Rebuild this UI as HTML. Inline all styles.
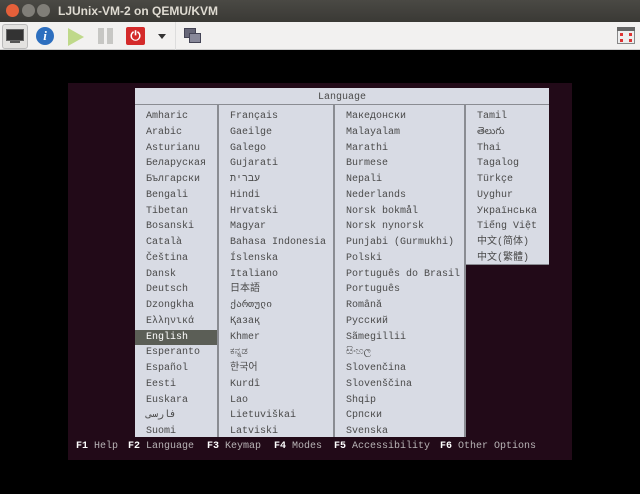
<!DOCTYPE html>
<html><head><meta charset="utf-8"><style>
*{margin:0;padding:0;box-sizing:border-box}
body{width:640px;height:494px;background:#000;position:relative;overflow:hidden;font-family:"Liberation Sans",sans-serif}
.tb{position:absolute;left:0;top:0;width:640px;height:22px;background:linear-gradient(#4a4944,#3a3935)}
.tb .t{position:absolute;left:58px;top:4px;color:#dfdbd2;font-size:12px;font-weight:bold}
.c{position:absolute;top:4px;width:13px;height:13px;border-radius:50%}
.tool{position:absolute;left:0;top:22px;width:640px;height:28px;background:#f2f1f0;border-bottom:1px solid #ccc}
.vm{position:absolute;left:68px;top:83px;width:504px;height:377px;background:#220a18}
.dlg{position:absolute;left:135px;top:88px;width:414px;height:349px;background:#d8dbe4}
.hdr{position:absolute;left:0;top:0;width:414px;height:17px;border-bottom:1px solid #8a8c92;text-align:center;font:10px/20px "Liberation Mono","DejaVu Sans Mono",monospace;color:#4a4a4a}
.col{position:absolute;font:10px/15.75px "Liberation Mono","DejaVu Sans Mono","Noto Sans CJK SC",monospace;color:#4a4a4a;white-space:pre}
.col div{padding-left:11px;height:15.75px}
.sep{position:absolute;top:17px;width:2px;background:#8a8c92;height:332px}
.sel{background:#5b5e56;color:#fff}
.mask{position:absolute;left:466px;top:265px;width:106px;height:172px;background:#220a18}
.fk{position:absolute;top:439px;font:10px/15px "Liberation Mono","DejaVu Sans Mono",monospace;color:#b8b4b6;white-space:pre}
.fk b{color:#fff}
</style></head><body>
<div class="tb">
<div class="c" style="left:6px;background:#e5603a"></div>
<div class="c" style="left:22px;background:#807e78"></div>
<div class="c" style="left:37px;background:#807e78"></div>
<div class="t">LJUnix-VM-2 on QEMU/KVM</div>
</div>
<div class="tool">
<div style="position:absolute;left:2px;top:2px;width:26px;height:25px;border:1px solid #bbb;border-radius:3px;background:#e3e2e0"></div>
<div style="position:absolute;left:6px;top:7px;width:18px;height:12px;background:#333;border:1px solid #666"></div>
<div style="position:absolute;left:10px;top:19px;width:10px;height:2px;background:#555"></div>
<div style="position:absolute;left:36px;top:5px;width:18px;height:18px;border-radius:50%;background:#2d6fbf;color:#fff;font:italic bold 13px/18px serif;text-align:center">i</div>
<svg style="position:absolute;left:66px;top:5px" width="20" height="20"><polygon points="2,1 18,10 2,19" fill="#bfd98a"/></svg>
<div style="position:absolute;left:98px;top:6px;width:6px;height:16px;background:#c7c7c4"></div>
<div style="position:absolute;left:107px;top:6px;width:6px;height:16px;background:#c7c7c4"></div>
<div style="position:absolute;left:126px;top:5px;width:19px;height:18px;background:#d42a2a;border-radius:2px;color:#fff;font:bold 13px/18px sans-serif;text-align:center">⏻</div>
<svg style="position:absolute;left:158px;top:12px" width="8" height="5"><polygon points="0,0 8,0 4,5" fill="#333"/></svg>
<div style="position:absolute;left:175px;top:0;width:1px;height:28px;background:#ddd"></div>
<div style="position:absolute;left:184px;top:6px;width:12px;height:10px;background:#667;border:1px solid #445"></div>
<div style="position:absolute;left:189px;top:11px;width:12px;height:10px;background:#889;border:1px solid #445"></div>
<div style="position:absolute;left:617px;top:5px;width:18px;height:17px;background:#eee;border:1px solid #888"></div>
<div style="position:absolute;left:617px;top:5px;width:18px;height:4px;background:#666"></div>
<div style="position:absolute;left:620px;top:11px;width:3px;height:3px;background:#d33"></div>
<div style="position:absolute;left:629px;top:11px;width:3px;height:3px;background:#d33"></div>
<div style="position:absolute;left:620px;top:17px;width:3px;height:3px;background:#d33"></div>
<div style="position:absolute;left:629px;top:17px;width:3px;height:3px;background:#d33"></div>
</div>
<div class="vm"></div>
<div class="dlg">
<div class="hdr">Language</div>
<div class="col" style="left:0;top:21px;width:82px"><div>Amharic</div><div>Arabic</div><div>Asturianu</div><div>Беларуская</div><div>Български</div><div>Bengali</div><div>Tibetan</div><div>Bosanski</div><div>Català</div><div>Čeština</div><div>Dansk</div><div>Deutsch</div><div>Dzongkha</div><div>Ελληνικά</div><div class="sel">English</div><div>Esperanto</div><div>Español</div><div>Eesti</div><div>Euskara</div><div>فارسی</div><div>Suomi</div></div>
<div class="sep" style="left:82px"></div>
<div class="col" style="left:84px;top:21px"><div>Français</div><div>Gaeilge</div><div>Galego</div><div>Gujarati</div><div>עברית</div><div>Hindi</div><div>Hrvatski</div><div>Magyar</div><div>Bahasa Indonesia</div><div>Íslenska</div><div>Italiano</div><div>日本語</div><div>ქართული</div><div>Қазақ</div><div>Khmer</div><div>ಕನ್ನಡ</div><div>한국어</div><div>Kurdî</div><div>Lao</div><div>Lietuviškai</div><div>Latviski</div></div>
<div class="sep" style="left:198px"></div>
<div class="col" style="left:200px;top:21px"><div>Македонски</div><div>Malayalam</div><div>Marathi</div><div>Burmese</div><div>Nepali</div><div>Nederlands</div><div>Norsk bokmål</div><div>Norsk nynorsk</div><div>Punjabi (Gurmukhi)</div><div>Polski</div><div>Português do Brasil</div><div>Português</div><div>Română</div><div>Русский</div><div>Sãmegillii</div><div>සිංහල</div><div>Slovenčina</div><div>Slovenščina</div><div>Shqip</div><div>Српски</div><div>Svenska</div></div>
<div class="sep" style="left:329px"></div>
<div class="col" style="left:331px;top:21px"><div>Tamil</div><div>తెలుగు</div><div>Thai</div><div>Tagalog</div><div>Türkçe</div><div>Uyghur</div><div>Українська</div><div>Tiếng Việt</div><div>中文(简体)</div><div>中文(繁體)</div></div>
</div>
<div class="mask"></div>
<div style="position:absolute;left:465px;top:264px;width:84px;height:1px;background:#8a8c92"></div>
<div class="fk" style="left:76px"><b>F1</b> Help</div>
<div class="fk" style="left:128px"><b>F2</b> Language</div>
<div class="fk" style="left:207px"><b>F3</b> Keymap</div>
<div class="fk" style="left:274px"><b>F4</b> Modes</div>
<div class="fk" style="left:334px"><b>F5</b> Accessibility</div>
<div class="fk" style="left:440px"><b>F6</b> Other Options</div>
</body></html>
